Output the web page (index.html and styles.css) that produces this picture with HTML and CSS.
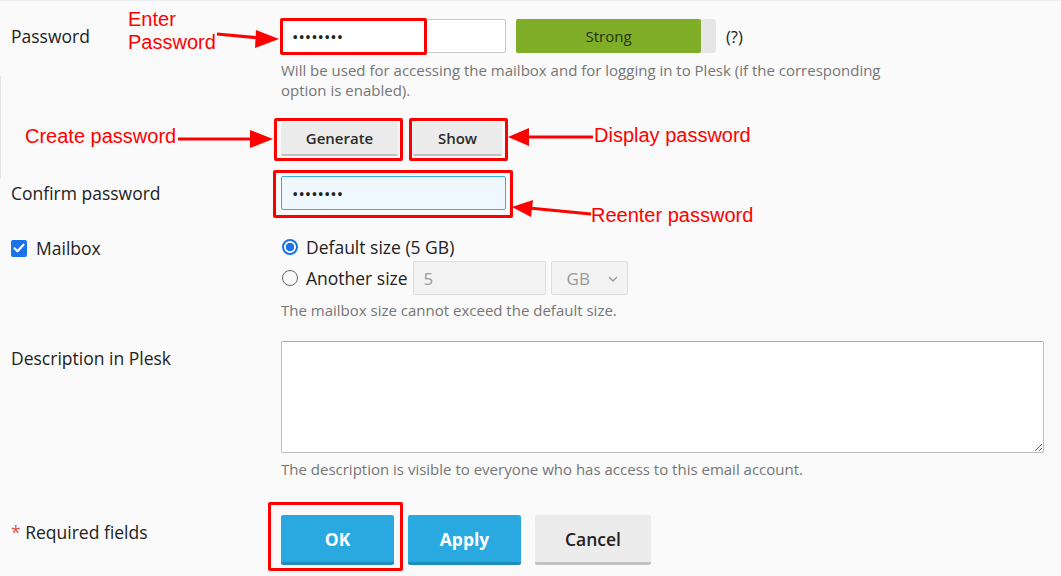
FILE: index.html
```html
<!DOCTYPE html>
<html>
<head>
<meta charset="utf-8">
<link rel="stylesheet" href="styles.css">
</head>
<body>
<div class="page">
  <form class="form">
    <div class="row row-pass">
      <div class="label">Password</div>
      <div class="field">
        <div class="inline">
          <input class="input pass" type="password" value="12345678">
          <div class="meter"><div class="meter-fill">Strong</div></div>
          <span class="help">(?)</span>
        </div>
        <div class="hint hint-pass">Will be used for accessing the mailbox and for logging in to Plesk (if the corresponding option is enabled).</div>
      </div>
    </div>
    <div class="row row-btns">
      <div class="label"></div>
      <div class="field inline gap-btn">
        <button type="button" class="btn btn-gen">Generate</button>
        <button type="button" class="btn btn-show">Show</button>
      </div>
    </div>
    <div class="row row-confirm">
      <div class="label">Confirm password</div>
      <div class="field">
        <input class="input confirm" type="password" value="12345678">
      </div>
    </div>
    <div class="row row-mail">
      <div class="label label-check"><span class="check"><svg viewBox="0 0 16 16" width="16" height="16"><path d="M3.5 8.3l3 3 6-6.6" fill="none" stroke="#fff" stroke-width="2.2" stroke-linecap="round" stroke-linejoin="round"/></svg></span>Mailbox</div>
      <div class="field">
        <div class="radio-line"><span class="radio on"></span>Default size (5 GB)</div>
        <div class="radio-line second"><span class="radio"></span>Another size
          <input class="input size" type="text" value="5" disabled>
          <div class="select">GB<svg viewBox="0 0 10 6" width="10" height="6"><path d="M1 1l4 4 4-4" fill="none" stroke="#999" stroke-width="1.3"/></svg></div>
        </div>
        <div class="hint hint-size">The mailbox size cannot exceed the default size.</div>
      </div>
    </div>
    <div class="row row-desc">
      <div class="label label-top">Description in Plesk</div>
      <div class="field">
        <textarea class="textarea"></textarea>
        <div class="hint hint-desc">The description is visible to everyone who has access to this email account.</div>
      </div>
    </div>
    <div class="row row-actions">
      <div class="label label-top"><span class="req">*</span> Required fields</div>
      <div class="field inline gap-act">
        <button type="button" class="act primary ok">OK</button>
        <button type="button" class="act primary apply">Apply</button>
        <button type="button" class="act cancel">Cancel</button>
      </div>
    </div>
  </form>

  <div class="note note-enter">Enter<br>Password</div>
  <div class="note note-create">Create password</div>
  <div class="note note-display">Display password</div>
  <div class="note note-reenter">Reenter password</div>

  <div class="mark mark-pass"></div>
  <div class="mark mark-gen"></div>
  <div class="mark mark-show"></div>
  <div class="mark mark-confirm"></div>
  <div class="mark mark-ok"></div>

  <svg class="arrows" viewBox="0 0 1061 576" width="1061" height="576">
    <g stroke="#f00" stroke-width="3" fill="none">
      <line x1="217" y1="33" x2="260" y2="37"/>
      <line x1="178" y1="138" x2="254" y2="138"/>
      <line x1="526" y1="136" x2="593" y2="136"/>
      <line x1="529" y1="207" x2="591" y2="213"/>
    </g>
    <g fill="#f00">
      <polygon points="279,38 256,29 255,47"/>
      <polygon points="273,138 250,129 250,147"/>
      <polygon points="508,136 529,127 529,145"/>
      <polygon points="512,206 533,199 531,216"/>
    </g>
  </svg>
</div>
</body>
</html>
```
FILE: styles.css
```css
html, body {
  margin: 0;
  padding: 0;
}
body {
  background: #fafafa;
  font-family: "Open Sans", "Noto Sans", sans-serif;
  color: #222;
  width: 1061px;
  height: 576px;
  overflow: hidden;
}
.page {
  position: relative;
  width: 1061px;
  height: 576px;
  border-top: 1px solid #eeeeee;
  box-sizing: border-box;
}
.page::before {
  content: "";
  position: absolute;
  left: 0;
  top: 75px;
  width: 1px;
  height: 103px;
  background: #e4e4e4;
}
.form {
  display: flex;
  flex-direction: column;
  padding: 0 17px 0 11px;
}
.row {
  display: grid;
  grid-template-columns: 270px 1fr;
  align-items: start;
}
.label {
  font-size: 17.5px;
  line-height: 34px;
  color: #222;
  white-space: nowrap;
}
.label-top {
  line-height: 24px;
  padding-top: 5px;
}
.field {
  min-width: 0;
}
.inline {
  display: flex;
  align-items: center;
}
.row-pass { margin-top: 18px; }
.row-btns { margin-top: 21px; }
.row-confirm { margin-top: 20px; }
.row-mail { margin-top: 25px; }
.row-desc { margin-top: 21px; }
.row-actions { margin-top: 36px; }

.input {
  box-sizing: border-box;
  height: 34px;
  border: 1px solid #c8c8c8;
  border-radius: 2px;
  background: #fff;
  font-family: "Open Sans", sans-serif;
  font-size: 17px;
  padding: 0 10px;
  color: #222;
  margin: 0;
  outline: none;
}
.pass { width: 225px; }
.confirm {
  width: 225px;
  background: #eff8fe;
  border-color: #36aee3;
}
.meter {
  margin-left: 10px;
  width: 200px;
  height: 34px;
  background: #e6e6e6;
  border-radius: 2px;
}
.meter-fill {
  width: 185px;
  height: 34px;
  background: #80ae28;
  border-radius: 2px;
  color: #26330e;
  font-size: 15px;
  line-height: 34px;
  text-align: center;
}
.help {
  margin-left: 10px;
  font-size: 16.5px;
  color: #222;
}
.hint {
  font-size: 15px;
  line-height: 20px;
  color: #767676;
}
.hint-pass {
  margin-top: 7px;
  max-width: 620px;
}
.hint-size { margin-top: 5px; }
.hint-desc { margin-top: 6px; }

.gap-btn { gap: 15px; }
.btn {
  box-sizing: border-box;
  height: 34px;
  background: #ececec;
  border: 0;
  border-bottom: 2px solid #c0c0c0;
  border-radius: 2px;
  font-family: "Open Sans", sans-serif;
  font-size: 15px;
  font-weight: 600;
  color: #2a2a2a;
  margin: 0;
  padding: 0;
}
.btn-gen { width: 117px; margin-top: 1px; }
.btn-show { width: 89px; margin-top: 1px; }

.label-check {
  display: flex;
  align-items: center;
  line-height: 24px;
  height: 24px;
  margin-top: 1px;
}
.check {
  width: 16px;
  height: 17px;
  background: #1a73e8;
  border-radius: 2px;
  margin-right: 9px;
  display: flex;
  align-items: center;
  justify-content: center;
}
.radio-line {
  display: flex;
  align-items: center;
  font-size: 17.5px;
  line-height: 24px;
  height: 24px;
  color: #222;
}
.radio-line.second {
  margin-top: 2px;
  height: 34px;
}
.radio {
  box-sizing: border-box;
  width: 16px;
  height: 16px;
  border: 1.3px solid #666;
  border-radius: 50%;
  margin: 0 8px 0 1px;
  flex: none;
}
.radio.on {
  border: 2px solid #1a73e8;
  background: radial-gradient(circle, #1a73e8 0 4px, #fff 4.5px);
}
.size {
  width: 133px;
  margin-left: 5px;
  background: #f3f3f3;
  border-color: #dedede;
  color: #999;
  font-size: 17px;
}
.select {
  box-sizing: border-box;
  width: 77px;
  height: 34px;
  margin-left: 5px;
  background: #f3f3f3;
  border: 1px solid #dedede;
  border-radius: 2px;
  color: #9a9a9a;
  font-size: 17px;
  display: flex;
  align-items: center;
  justify-content: space-between;
  padding: 2px 9px 0 15px;
}
.textarea {
  display: block;
  box-sizing: border-box;
  width: 100%;
  height: 112px;
  border: 1px solid #bdbdbd;
  border-top-color: #a9a9a9;
  border-radius: 2px;
  background: #fff;
  margin: 0;
  resize: both;
}
.req { color: #d9534f; }
.gap-act { gap: 14px; align-items: flex-start; }
.act {
  box-sizing: border-box;
  height: 50px;
  border: 0;
  border-radius: 2px;
  font-family: "Open Sans", sans-serif;
  font-size: 17.5px;
  margin: 0;
  padding: 0;
}
.primary {
  background: #29a9df;
  border-bottom: 3px solid #1d8cbf;
  color: #fff;
  font-weight: 700;
}
.ok { width: 113px; }
.apply { width: 113px; }
.cancel {
  width: 116px;
  background: #ececec;
  border-bottom: 3px solid #c3c3c3;
  color: #222;
  font-weight: 600;
}

.note {
  position: absolute;
  font-family: "Liberation Sans", Arial, sans-serif;
  font-size: 20px;
  color: #f00;
  line-height: 23px;
  white-space: nowrap;
}
.note-enter { left: 128px; top: 7px; }
.note-create { left: 25px; top: 124px; }
.note-display { left: 594px; top: 123px; }
.note-reenter { left: 591px; top: 203px; }

.mark {
  position: absolute;
  border: 3px solid #f00;
  border-radius: 2px;
  box-sizing: border-box;
}
.mark-pass { left: 280px; top: 17px; width: 147px; height: 37px; }
.mark-gen { left: 274px; top: 117px; width: 129px; height: 43px; }
.mark-show { left: 409px; top: 117px; width: 99px; height: 43px; }
.mark-confirm { left: 273px; top: 169px; width: 240px; height: 48px; }
.mark-ok { left: 268px; top: 501px; width: 135px; height: 69px; }

.arrows {
  position: absolute;
  left: 0;
  top: 0;
  pointer-events: none;
}
```
